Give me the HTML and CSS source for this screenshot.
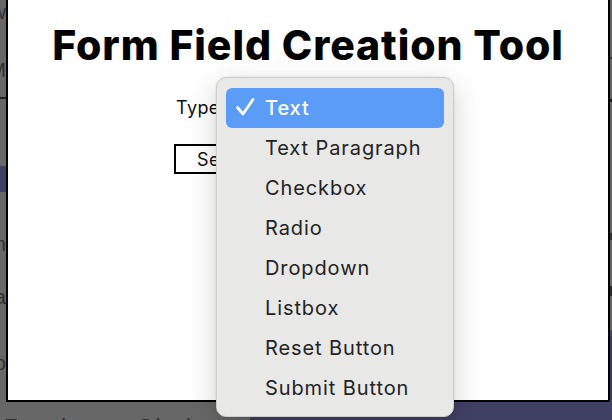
FILE: index.html
```html
<!DOCTYPE html>
<html lang="en">
<head>
<meta charset="utf-8">
<title>Form Field Creation Tool</title>
<link rel="stylesheet" href="styles.css">
</head>
<body>
<div class="page">
  <div class="page-upper">
    <div class="side-left">
      <span class="frag f1">Ww</span>
      <span class="frag f2">MM</span>
      <span class="rule"></span>
      <span class="navy-chip"></span>
      <span class="frag f3">rm</span>
      <span class="frag f4">da</span>
      <span class="frag f5">lo</span>
    </div>
    <div class="page-spacer"></div>
    <div class="side-right">
      <span class="mark m1"></span>
      <span class="mark m2"></span>
      <span class="mark m3"></span>
      <span class="mark m4"></span>
      <span class="navy-fill"></span>
    </div>
  </div>
  <div class="page-footer">
    <div class="footer-text">Freelance Shelves</div>
    <div class="footer-navy"></div>
  </div>
</div>

<div class="modal">
  <h1 class="title">Form Field Creation Tool</h1>
  <div class="type-row">
    <span class="type-label">Type:</span>
    <span class="type-select"></span>
  </div>
  <div class="btn-row">
    <button class="set-btn" type="button">Set Field</button>
  </div>
</div>

<ul class="menu">
  <li class="item selected"><svg class="check" viewBox="0 0 20 20" width="20" height="20"><path d="M2.5 10.5 L8 17 L18 2.5" fill="none" stroke="#fff" stroke-width="2.8" stroke-linecap="round" stroke-linejoin="round"/></svg>Text</li>
  <li class="item">Text Paragraph</li>
  <li class="item">Checkbox</li>
  <li class="item">Radio</li>
  <li class="item">Dropdown</li>
  <li class="item">Listbox</li>
  <li class="item">Reset Button</li>
  <li class="item">Submit Button</li>
</ul>
</body>
</html>
```

FILE: styles.css
```css
* { box-sizing: border-box; }
html, body { margin: 0; padding: 0; }
body {
  width: 612px;
  height: 420px;
  overflow: hidden;
  position: relative;
  background: #676767;
  font-family: "Inter", "Liberation Sans", sans-serif;
}

/* dimmed page behind the modal */
.page { display: flex; flex-direction: column; height: 420px; }
.page-upper { display: flex; height: 402px; }
.side-left {
  width: 6px;
  display: flex;
  flex-direction: column;
  align-items: flex-end;
  overflow: hidden;
}
.frag {
  font-family: "Liberation Sans", sans-serif;
  font-size: 20px;
  line-height: 20px;
  color: #2f2f2f;
  white-space: nowrap;
  direction: rtl;
}
.f1 { margin-top: 2px; }
.f2 { margin-top: 38px; }
.rule { display: block; width: 6px; height: 2px; background: #222; margin-top: 17px; }
.navy-chip { display: block; width: 6px; height: 26px; background: #3e3f63; margin-top: 67px; }
.f3 { margin-top: 42px; }
.f4 { margin-top: 33px; }
.f5 { margin-top: 46px; }
.page-spacer { flex: 1; }
.side-right { width: 2px; display: flex; flex-direction: column; }
.mark { display: block; width: 2px; background: #333; }
.m1 { height: 2px; margin-top: 57px; }
.m2 { height: 3px; margin-top: 40px; background: #1e1e1e; }
.m3 { height: 7px; margin-top: 131px; }
.m4 { height: 10px; margin-top: 46px; background: #2a2a2a; }
.navy-fill { flex: 1; margin-top: 34px; background: #3f4064; }
.page-footer { display: flex; height: 18px; }
.footer-text {
  width: 250px;
  padding-left: 4px;
  padding-top: 14px;
  font-family: "Liberation Sans", sans-serif;
  font-size: 22px;
  line-height: 22px;
  color: #2e2e2e;
  letter-spacing: 3px;
  white-space: nowrap;
  overflow: hidden;
}
.footer-navy { flex: 1; background: #3f4064; }

/* modal (overlay) */
.modal {
  position: absolute;
  left: 6px;
  top: -2px;
  width: 604px;
  height: 404px;
  background: #fff;
  border: 2px solid #000;
}
.title {
  margin: 0;
  padding-top: 25px;
  text-align: center;
  font-family: "Inter", sans-serif;
  font-weight: 800;
  font-size: 41px;
  line-height: 40px;
  color: #000;
  letter-spacing: 0.9px;
}
.type-row {
  display: flex;
  align-items: center;
  margin-top: 30px;
  padding-left: 168px;
  height: 24px;
  font-size: 18px;
  letter-spacing: 0.4px;
  color: #111;
}
.type-label { margin-right: 8px; }
.type-select { display: inline-block; width: 200px; height: 24px; }
.btn-row { margin-top: 25px; padding-left: 166px; }
.set-btn {
  width: 120px;
  height: 30px;
  border: 2px solid #000;
  background: #fff;
  font-family: "Inter", sans-serif;
  font-size: 18px;
  letter-spacing: 0.4px;
  color: #111;
  text-align: left;
  padding: 0 0 0 21px;
}

/* native-style popup menu (overlay) */
.menu {
  position: absolute;
  left: 216px;
  top: 77px;
  width: 238px;
  height: 340px;
  margin: 0;
  padding: 10px 9px 8px;
  list-style: none;
  background: #e8e8e7;
  border: 1px solid #cdcdcd;
  border-radius: 10px;
  box-shadow: 0 8px 28px rgba(0, 0, 0, 0.18), 0 0 3px rgba(0, 0, 0, 0.08);
}
.item {
  position: relative;
  height: 40px;
  line-height: 41px;
  padding-left: 39px;
  font-family: "Inter", sans-serif;
  font-size: 20px;
  letter-spacing: 0.9px;
  color: #232323;
  border-radius: 6px;
  white-space: nowrap;
}
.item.selected {
  background: #5a9cf8;
  color: #fff;
  font-weight: 500;
}
.check { position: absolute; left: 9px; top: 9px; }
```
